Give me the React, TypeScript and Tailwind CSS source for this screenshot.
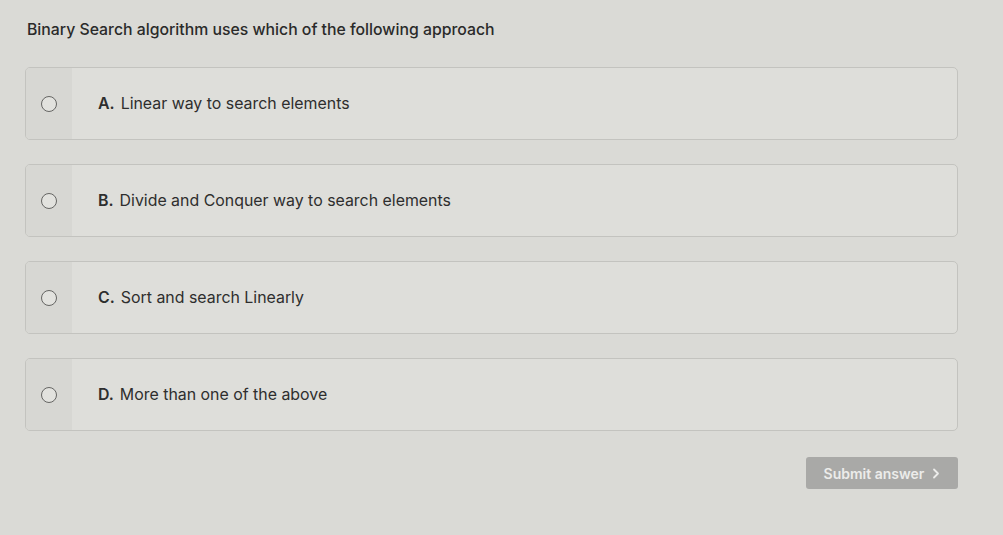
import React from "react";

const options = [
  { letter: "A", text: "Linear way to search elements" },
  { letter: "B", text: "Divide and Conquer way to search elements" },
  { letter: "C", text: "Sort and search Linearly" },
  { letter: "D", text: "More than one of the above" },
];

export default function App() {
  return (
    <div
      className="w-[1003px] h-[535px] bg-[#dadad6] text-[#2b2b2b] overflow-hidden"
      style={{ fontFamily: "Inter, 'Noto Sans', sans-serif" }}
    >
      <div className="pl-[25px] pr-[45px] pt-[19px]">
        <h1 className="pl-[2px] text-[15.8px] leading-[22px] font-medium text-[#2a2a2a]">
          Binary Search algorithm uses which of the following approach
        </h1>
        <div className="mt-[26px] flex flex-col gap-[24px]">
          {options.map((o) => (
            <div
              key={o.letter}
              className="flex h-[73px] rounded-[5px] border border-[#c3c3bf] bg-[#dededa] overflow-hidden"
            >
              <div className="w-[46px] flex items-center justify-center bg-[#d7d7d3]">
                <span className="block w-[16px] h-[16px] rounded-full border-[1.5px] border-[#656563] bg-[#e2e2de]" />
              </div>
              <div className="flex items-center pl-[26px] text-[15.9px] text-[#2e2e2e]">
                <span className="font-semibold mr-[6px]">{o.letter}.</span>
                <span>{o.text}</span>
              </div>
            </div>
          ))}
        </div>
        <div className="mt-[26px] flex justify-end">
          <button className="h-[32px] w-[152px] rounded-[3px] bg-[#a9a9a7] text-[#ececea] text-[14px] font-semibold flex items-center justify-center gap-[8px]">
            <span>Submit answer</span>
            <svg width="8" height="11" viewBox="0 0 8 11" fill="none">
              <path d="M2 1.5 L6 5.5 L2 9.5" stroke="#ececea" strokeWidth="1.8" strokeLinecap="round" strokeLinejoin="round" />
            </svg>
          </button>
        </div>
      </div>
    </div>
  );
}
